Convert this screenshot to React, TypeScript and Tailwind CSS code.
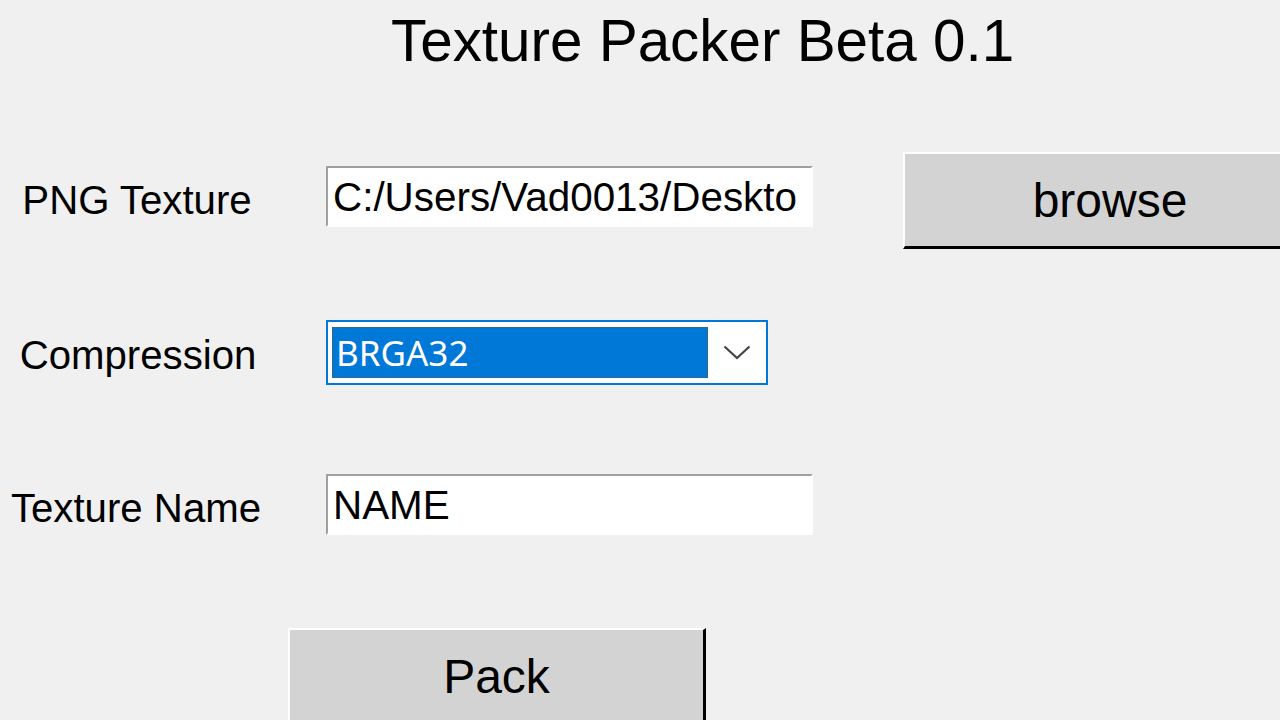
export default function App() {
  return (
    <div className="h-[720px] w-[1280px] overflow-hidden bg-[#f0f0f0] text-black font-['Liberation_Sans',Arial,sans-serif]">
      {/* Title */}
      <div className="ml-[391px] pt-[7px] text-[58.4px] leading-[67px] whitespace-nowrap">
        Texture Packer Beta 0.1
      </div>

      {/* PNG Texture row */}
      <div className="mt-[78px] flex h-[97px] items-center">
        <div className="w-[274px] shrink-0 text-center text-[40.2px] leading-[45px] whitespace-nowrap">PNG Texture</div>
        <div className="ml-[52px] flex h-[61px] w-[487px] shrink-0 items-center self-start mt-[14px] overflow-hidden border-t-2 border-l-2 border-b-2 border-r-2 border-t-[#a0a0a0] border-l-[#a0a0a0] border-b-white border-r-white bg-white pl-[5px] text-[40.4px] leading-[46px] whitespace-nowrap">
          C:/Users/Vad0013/Deskto
        </div>
        <button className="ml-[90px] h-[97px] w-[415px] shrink-0 border-t-2 border-l-2 border-b-[3px] border-r-[3px] border-t-white border-l-white border-b-black border-r-black bg-[#d3d3d3] text-[48px] leading-[55px] font-['Liberation_Sans',Arial,sans-serif]">
          browse
        </button>
      </div>

      {/* Compression row */}
      <div className="mt-[71px] flex h-[65px] items-center">
        <div className="mt-[6px] w-[276px] shrink-0 text-center text-[40.2px] leading-[45px] whitespace-nowrap">Compression</div>
        <div className="ml-[50px] flex h-[65px] w-[442px] shrink-0 items-center border-2 border-[#0078d7] bg-white pl-[4px]">
          <div className="flex h-[51px] w-[376px] items-center border border-dotted border-[#6b5a35] bg-[#0078d7] pl-[3px] text-[35px] leading-[44px] text-white font-['Noto_Sans','Open_Sans',sans-serif]">
            BRGA32
          </div>
          <div className="flex flex-1 items-center justify-center">
            <svg width="28" height="15" viewBox="0 0 28 15" fill="none">
              <path d="M1.5 1.5 L14 13 L26.5 1.5" stroke="#444" strokeWidth="2.2" />
            </svg>
          </div>
        </div>
      </div>

      {/* Texture Name row */}
      <div className="mt-[89px] flex h-[61px] items-center">
        <div className="mt-[7px] w-[272px] shrink-0 text-center text-[40.2px] leading-[45px] whitespace-nowrap">Texture Name</div>
        <div className="ml-[54px] flex h-[61px] w-[487px] shrink-0 items-center overflow-hidden border-t-2 border-l-2 border-b-2 border-r-2 border-t-[#a0a0a0] border-l-[#a0a0a0] border-b-white border-r-white bg-white pl-[5px] text-[40.4px] leading-[46px] whitespace-nowrap">
          NAME
        </div>
      </div>

      {/* Pack button */}
      <div className="mt-[93px] flex">
        <button className="ml-[288px] h-[97px] w-[418px] shrink-0 border-t-2 border-l-2 border-b-[3px] border-r-[3px] border-t-white border-l-white border-b-black border-r-black bg-[#d3d3d3] text-[48px] leading-[55px] font-['Liberation_Sans',Arial,sans-serif]">
          Pack
        </button>
      </div>
    </div>
  );
}
